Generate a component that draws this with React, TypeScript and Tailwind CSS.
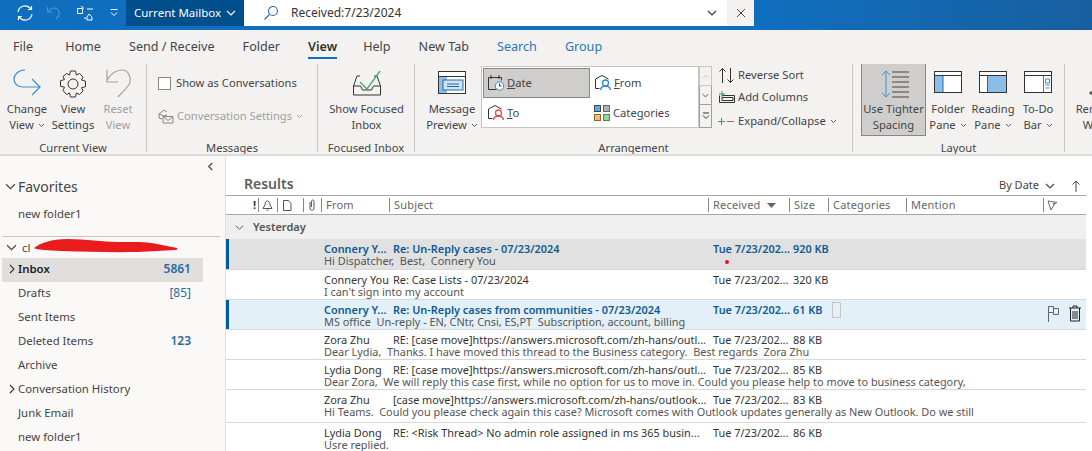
import type { ReactNode } from "react";

const Caret = ({ className = "text-[#605e5c]" }: { className?: string }) => (
  <svg width="7" height="5" viewBox="0 0 7 5" className={`inline-block ml-1 mb-px ${className}`} fill="none" stroke="currentColor">
    <path d="M1 1l2.5 2.5L6 1" />
  </svg>
);

const Chevron = ({ dir = "down", size = 10, className = "" }: { dir?: "down" | "right" | "left"; size?: number; className?: string }) => (
  <svg width={size} height={size} viewBox="0 0 10 10" fill="none" stroke="currentColor" strokeWidth="1.1" className={className}>
    {dir === "down" && <path d="M1 3l4 4 4-4" />}
    {dir === "right" && <path d="M3 1l4 4-4 4" />}
    {dir === "left" && <path d="M7 1L3 5l4 4" strokeWidth="1.6" />}
  </svg>
);

function LargeButton({ icon, lines, caret, disabled, w, active }: { icon: ReactNode; lines: string[]; caret?: boolean; disabled?: boolean; w: number; active?: boolean }) {
  return (
    <div
      className={`flex flex-col items-center shrink-0 ${active ? "bg-[#cfcecd] border border-[#8a8886] -mt-px h-[73px]" : ""} ${disabled ? "text-[#a19f9d]" : "text-[#444]"}`}
      style={{ width: w }}
    >
      <div className="h-[37px] flex items-center justify-center mt-[1px]">{icon}</div>
      <div className="text-center leading-[16px] whitespace-nowrap mt-[-1px]">
        {lines.map((l, i) => (
          <div key={l}>
            {l}
            {caret && i === lines.length - 1 && <Caret />}
          </div>
        ))}
      </div>
    </div>
  );
}

function Group({ label, w, children, last }: { label: string; w: number; children: ReactNode; last?: boolean }) {
  return (
    <section className={`shrink-0 flex flex-col h-[88px] ${last ? "" : "border-r border-[#c8c6c4]"}`} style={{ width: w }}>
      <div className="flex h-[73px] shrink-0">{children}</div>
      <div className="shrink-0 text-center text-[#444] leading-[14px] mt-[4px] whitespace-nowrap">{label}</div>
    </section>
  );
}

const Frame = ({ fill }: { fill: "left" | "right" | "todo" }) => (
  <svg width="30" height="24" viewBox="0 0 30 24" fill="none" stroke="#333" className="mb-[4px]">
    <rect x="1.5" y="5.5" width="27" height="17" fill="#fff" />
    {fill === "left" && <rect x="2" y="6" width="8" height="16" fill="#8cbde9" stroke="none" />}
    {fill === "right" && <rect x="10" y="6" width="18" height="16" fill="#8cbde9" stroke="none" />}
    {fill === "left" && <path d="M10 6v16" stroke="#1f6fb2" />}
    {fill === "right" && <path d="M9.5 6v16" stroke="#1f6fb2" />}
    {fill === "todo" && <path d="M20.5 6v16" stroke="#1f8ab2" />}
    {fill === "todo" && <path d="M22.5 9h4v4h-4zM22.5 15h4M22.5 18h4" stroke="#3a8cc9" />}
    <rect x="1.5" y="1.5" width="27" height="4" fill="#fff" />
  </svg>
);

const PersonCard = ({ color, date }: { color: string; date?: boolean }) => (
  <svg width="18" height="18" viewBox="0 0 18 18" fill="none" stroke="#333" className="shrink-0">
    {date ? (
      <>
        <path d="M1.5 3.5h13M1.5 3.5v12h8M14.5 3.5v3M4 1v4M12 1v4" />
        <circle cx="12.5" cy="12" r="4.2" stroke={color} fill="#fff" />
        <path d="M12.5 9.5V12h2" stroke="#333" />
      </>
    ) : (
      <>
        <path d="M1.5 14.5V5L8 1.5 14.5 5M1.5 14.5h4" />
        <circle cx="11.5" cy="9" r="3" stroke={color} strokeWidth="1.3" />
        <path d="M6.5 16c.5-3 2.5-4 5-4s4.500 1 5 4" stroke={color} strokeWidth="1.3" />
      </>
    )}
  </svg>
);

const Tile = ({ selected, children }: { selected?: boolean; children: ReactNode }) => (
  <div className={`h-[30px] flex items-center gap-[2px] pl-[3px] text-[#444] ${selected ? "bg-[#cfcecd] border border-[#8a8886]" : "border border-transparent"}`}>
    {children}
  </div>
);

type Msg = {
  from: string;
  subject: string;
  received: string;
  size: string;
  preview: string;
  unread?: boolean;
  bg?: string;
  h?: number;
  extra?: ReactNode;
};

const messages: Msg[] = [
  {
    from: "Connery Y...",
    subject: "Re: Un-Reply cases - 07/23/2024",
    received: "Tue 7/23/202...",
    size: "920 KB",
    preview: "Hi Dispatcher,  Best,  Connery You",
    unread: true,
    bg: "bg-[#e1e1e1]",
    h: 31,
    extra: <span className="absolute left-[499px] top-[21px] w-[4px] h-[4px] rounded-full bg-[#e81123]" />,
  },
  {
    from: "Connery You",
    subject: "Re: Case Lists - 07/23/2024",
    received: "Tue 7/23/202...",
    size: "320 KB",
    preview: "I can't sign into my account",
  },
  {
    from: "Connery Y...",
    subject: "Re: Un-Reply cases from communities - 07/23/2024",
    received: "Tue 7/23/202...",
    size: "61 KB",
    preview: "MS office  Un-reply - EN, CNtr, Cnsi, ES,PT  Subscription, account, billing",
    unread: true,
    bg: "bg-[#e3f0f8]",
    extra: (
      <>
        <span className="absolute left-[606px] top-[2px] w-[9px] h-[16px] border border-[#c8c6c4]" />
        <svg width="12" height="18" viewBox="0 0 12 18" fill="none" stroke="#666" className="absolute left-[821px] top-[5px]">
          <path d="M1.500 17V1.500h5v2h5v6h-5v-2h-5M6.500 1.500v6" />
        </svg>
        <svg width="14" height="17" viewBox="0 0 14 17" fill="none" stroke="#222" className="absolute left-[842px] top-[5px]">
          <path d="M1 3h12M5 3V1h4v2M2.500 3v13h9V3M5 6v8M7 6v8M9 6v8" />
        </svg>
      </>
    ),
  },
  {
    from: "Zora Zhu",
    subject: "RE: [case move]https://answers.microsoft.com/zh-hans/outl...",
    received: "Tue 7/23/202...",
    size: "88 KB",
    preview: "Dear Lydia,  Thanks. I have moved this thread to the Business category.  Best regards  Zora Zhu",
  },
  {
    from: "Lydia Dong",
    subject: "RE: [case move]https://answers.microsoft.com/zh-hans/outl...",
    received: "Tue 7/23/202...",
    size: "85 KB",
    preview: "Dear Zora,  We will reply this case first, while no option for us to move in. Could you please help to move to business category,",
  },
  {
    from: "Zora Zhu",
    subject: "[case move]https://answers.microsoft.com/zh-hans/outlook...",
    received: "Tue 7/23/202...",
    size: "83 KB",
    preview: "Hi Teams.  Could you please check again this case? Microsoft comes with Outlook updates generally as New Outlook. Do we still",
    h: 33,
  },
  {
    from: "Lydia Dong",
    subject: "RE: <Risk Thread> No admin role assigned in ms 365 busin...",
    received: "Tue 7/23/202...",
    size: "86 KB",
    preview: "Usre replied.",
  },
];

function MessageRow({ m }: { m: Msg }) {
  return (
    <div
      className={`relative shrink-0 border-b border-[#d8d8d8] pt-[4px] pl-[98px] leading-[12px] text-[10.9px] ${m.bg ?? ""} ${m.unread ? "text-[#0f5a92] font-semibold" : "text-[#333]"}`}
      style={{ height: m.h ?? 30 }}
    >
      {m.unread && <span className="absolute left-0 top-0 bottom-0 w-[3px] bg-[#005a9e]" />}
      <div className="flex whitespace-nowrap">
        <span className="w-[69px]">{m.from}</span>
        <span className="w-[320px]">{m.subject}</span>
        <span className="w-[80px]">{m.received}</span>
        <span>{m.size}</span>
      </div>
      <div className="font-normal text-[#555] whitespace-pre">{m.preview}</div>
      {m.extra}
    </div>
  );
}

const HeaderCell = ({ w, children }: { w: number; children?: ReactNode }) => (
  <div className="shrink-0 h-[14px] border-l border-[#8a8886] pl-[4px] flex items-center whitespace-nowrap overflow-hidden" style={{ width: w }}>
    {children}
  </div>
);

function NavRow({ label, count, chevron, bold, bracket, selected }: { label: string; count?: string; chevron?: boolean; bold?: boolean; bracket?: boolean; selected?: boolean }) {
  return (
    <div className={`h-[24px] w-[201px] ml-[2px] pb-[2px] flex items-center pl-[16px] pr-[12px] relative ${selected ? "bg-[#e1dfdd]" : ""}`}>
      {chevron && <Chevron dir="right" className="absolute left-[5px] text-[#333]" />}
      <span className={`flex-1 whitespace-nowrap ${bold ? "font-semibold text-[#222]" : "text-[#444]"}`}>{label}</span>
      {count && <span className={`text-[#2b6a9f] text-[12px] ${bracket ? "" : "font-semibold"}`}>{count}</span>}
    </div>
  );
}

export default function App() {
  const navRows = [
    { label: "Inbox", count: "5861", chevron: true, bold: true, selected: true },
    { label: "Drafts", count: "[85]", bracket: true },
    { label: "Sent Items" },
    { label: "Deleted Items", count: "123" },
    { label: "Archive" },
    { label: "Conversation History", chevron: true },
    { label: "Junk Email" },
    { label: "new folder1" },
  ];

  return (
    <div className="w-[1092px] h-[451px] overflow-hidden bg-white font-['Noto_Sans',sans-serif] text-[12px] flex flex-col">
      {/* title bar */}
      <header className="h-[30px] shrink-0 flex bg-gradient-to-r from-[#106ebe] via-[#106ebe] via-70% to-[#175f9f] text-white">
        <div className="w-[126px] h-[26px] flex items-center pl-[16px] shrink-0">
          <svg width="18" height="18" viewBox="0 0 18 18" fill="none" stroke="#fff" strokeWidth="1.2">
            <path d="M2 8a7 7 0 0 1 12-4l1 1.500M15.500 2v3.500H12M16 10a7 7 0 0 1-12 4l-1-1.500M2.500 16v-3.500H6" />
          </svg>
          <svg width="16" height="16" viewBox="0 0 16 16" fill="none" stroke="#4b93d2" strokeWidth="1.1" className="ml-[12px]">
            <path d="M1.500 2v5h5M2 7c2-4 6-5 9-3s3 7-1 10" />
          </svg>
          <svg width="18" height="16" viewBox="0 0 18 16" fill="none" stroke="#fff" className="ml-[14px]">
            <path d="M1.500 3.500h5v5h-5zM5 1l3 2.500M11 4h6M13 9l3 3v3h-5v-3zM8 13h2" />
          </svg>
          <svg width="10" height="10" viewBox="0 0 10 10" fill="none" stroke="#fff" className="ml-[15px]">
            <path d="M1.500 1.500h7M2 4.500l3 3 3-3" />
          </svg>
        </div>
        <div className="w-[118px] h-[26px] bg-[#004e8c] flex items-center pl-[8px] gap-[5px] text-[11.5px] whitespace-nowrap shrink-0">
          Current Mailbox
          <Chevron size={10} />
        </div>
        <div className="w-[483px] h-[26px] bg-white text-[#333] flex items-center pl-[19px] pr-[10px] shrink-0">
          <svg width="16" height="16" viewBox="0 0 16 16" fill="none" stroke="#2b6a9f" strokeWidth="1.1">
            <circle cx="10" cy="6" r="4.500" />
            <path d="M6.500 9.500L1.500 14.500" />
          </svg>
          <span className="ml-[12px] flex-1">Received:7/23/2024</span>
          <Chevron size={10} className="text-[#333]" />
        </div>
        <div className="w-[27px] h-[26px] bg-[#f3f2f1] text-[#444] flex items-center justify-center shrink-0">
          <svg width="10" height="10" viewBox="0 0 10 10" stroke="currentColor" fill="none">
            <path d="M1 1l8 8M9 1l-8 8" />
          </svg>
        </div>
      </header>

      {/* tabs */}
      <nav className="h-[34px] shrink-0 bg-[#f3f2f1] flex items-center gap-[28px] pl-[13px] text-[12.6px] text-[#444]">
        <span className="mr-[4px]">File</span>
        <span>Home</span>
        <span>Send / Receive</span>
        <span>Folder</span>
        <span className="relative font-semibold text-[#333] mr-[-2px]">
          View
          <span className="absolute left-0 right-0 top-[19px] h-[2px] bg-[#106ebe]" />
        </span>
        <span>Help</span>
        <span>New Tab</span>
        <span className="text-[#2b76b5]">Search</span>
        <span className="text-[#2b76b5]">Group</span>
      </nav>

      {/* ribbon */}
      <div className="h-[92px] shrink-0 bg-[#f3f2f1] border-b-2 border-[#dcdbd9] flex overflow-hidden text-[11.2px]">
        <Group label="Current View" w={147}>
          <div className="flex pl-[4px]">
            <LargeButton
              w={46}
              caret
              lines={["Change", "View"]}
              icon={
                <svg width="30" height="30" viewBox="0 0 30 30" fill="none" stroke="#3c8fd3" strokeWidth="1.200">
                  <path d="M13 1C6 1 2 6 2 10c0 5 4 8 9 8h17M20 10l8 8-8 8" />
                </svg>
              }
            />
            <LargeButton
              w={46}
              lines={["View", "Settings"]}
              icon={
                <svg width="30" height="30" viewBox="0 0 30 30" fill="none" stroke="#333" strokeWidth="1">
                  <circle cx="15" cy="15" r="5" />
                  <path d="M12.500 2h5l1 4 3-1.500 3.500 3.500-1.500 3 4 1.200v5.500l-4 1 1.500 3.300-3.500 3.500-3-1.500-1 4h-5l-1-4-3 1.500L5 21.500l1.500-3.300-4-1v-5.500l4-1.200-1.500-3L8.500 4.500l3 1.500z" />
                </svg>
              }
            />
            <LargeButton
              w={44}
              disabled
              lines={["Reset", "View"]}
              icon={
                <svg width="28" height="30" viewBox="0 0 28 30" fill="none" stroke="#a19f9d" strokeWidth="1.200">
                  <path d="M3 1v12h11M3 11C8 3 14 1 18 1c6 0 9 6 8 12-1 5-7 9-12 15" />
                </svg>
              }
            />
          </div>
        </Group>

        <Group label="Messages" w={171}>
          <div className="pl-[11px] flex flex-col">
            <div className="flex items-center gap-[5px] mt-[12px] h-[14px] text-[#444] whitespace-nowrap">
              <span className="w-[13px] h-[13px] bg-white border border-[#8a8886]" />
              Show as Conversations
            </div>
            <div className="flex items-center gap-[3px] mt-[18px] h-[16px] text-[#a19f9d] whitespace-nowrap">
              <svg width="16" height="16" viewBox="0 0 16 16" fill="none" stroke="#8a8886">
                <path d="M1 6l5-4 3 2M1 6l5 2 3-1M1 6v4l3 1M5 8.500h10v6.500H5zM5 8.500l5 4 5-4" />
              </svg>
              <span>
                Conversation Settings
                <Caret className="text-[#a19f9d]" />
              </span>
            </div>
          </div>
        </Group>

        <Group label="Focused Inbox" w={97}>
          <LargeButton
            w={97}
            lines={["Show Focused", "Inbox"]}
            icon={
              <svg width="30" height="28" viewBox="0 0 30 28" fill="none" stroke="#333">
                <path d="M5 6L1.500 16v9h27v-9L25 6h-3M5 6h3M1.500 16h7l2 4h9l2-4h7" />
                <path d="M8 12l7 7L28 1" stroke="#48a868" strokeWidth="1.300" />
              </svg>
            }
          />
        </Group>

        <Group label="Arrangement" w={438}>
          <div className="ml-[4px] -mr-[4px] shrink-0">
            <LargeButton
              w={66}
              caret
              lines={["Message", "Preview"]}
              icon={
                <svg width="30" height="26" viewBox="0 0 30 26" fill="none" stroke="#333" className="mb-[2px]">
                  <rect x="1.500" y="1.500" width="27" height="22" fill="#fff" />
                  <path d="M1.500 6.500h27" />
                  <rect x="2" y="7" width="8" height="16" fill="#8cbde9" stroke="none" />
                  <rect x="6" y="10" width="20" height="10" fill="#cfe3f5" stroke="#2b6a9f" />
                  <path d="M10 14h12M10 16.500h12" stroke="#2b6a9f" />
                </svg>
              }
            />
          </div>
          <div className="flex mt-[2px] h-[62px] shrink-0">
            <div className="w-[218px] h-[62px] bg-white border border-[#c8c6c4] p-px grid grid-cols-[107px_107px] content-start">
              <Tile selected>
                <PersonCard color="#2b88d8" date />
                <span className="mt-px"><u>D</u>ate</span>
              </Tile>
              <Tile>
                <PersonCard color="#2b88d8" />
                <span className="mt-px"><u>F</u>rom</span>
              </Tile>
              <Tile>
                <PersonCard color="#e04b4b" />
                <span className="mt-px"><u>T</u>o</span>
              </Tile>
              <Tile>
                <div className="grid grid-cols-2 gap-[2px] shrink-0">
                  <span className="w-[7px] h-[7px] bg-[#5ba8e6] border border-[#444]" />
                  <span className="w-[7px] h-[7px] bg-[#b3b0ad] border border-[#666]" />
                  <span className="w-[7px] h-[7px] bg-[#f7b96a] border border-[#8a6a30]" />
                  <span className="w-[7px] h-[7px] bg-[#8fd694] border border-[#4a8a50]" />
                </div>
                <span className="mt-px ml-px">Cate<u>g</u>ories</span>
              </Tile>
            </div>
            <div className="w-[13px] flex flex-col">
              <div className="h-[20px] border border-[#c8c6c4] flex items-center justify-center text-[#c8c6c4]">
                <svg width="7" height="5" viewBox="0 0 7 5" fill="none" stroke="currentColor"><path d="M1 4l2.500-2.500L6 4" /></svg>
              </div>
              <div className="h-[19px] border border-t-0 border-[#a19f9d] flex items-center justify-center text-[#333]">
                <Chevron size={7} />
              </div>
              <div className="h-[23px] border border-t-0 border-[#a19f9d] flex items-center justify-center text-[#333]">
                <svg width="8" height="8" viewBox="0 0 8 8" fill="none" stroke="currentColor"><path d="M1 1h6M1 3.500l3 3 3-3" /></svg>
              </div>
            </div>
          </div>
          <div className="flex flex-col ml-[6px] text-[#444] whitespace-nowrap">
            <div className="h-[22px] flex items-center gap-[3px]">
              <svg width="17" height="17" viewBox="0 0 17 17" fill="none" stroke="#333">
                <path d="M4.500 16V1.500M1.500 4.500l3-3 3 3M12.500 1v14.500M9.500 12.500l3 3 3-3" />
              </svg>
              Reverse Sort
            </div>
            <div className="h-[22px] flex items-center gap-[3px]">
              <svg width="17" height="14" viewBox="0 0 17 14" fill="none" stroke="#333">
                <path d="M1.500 5.500v7h15v-7H4M4 7.500h11v3H4z" />
                <path d="M4 1v6M1 4h6" stroke="#2f9e58" />
              </svg>
              Add Columns
            </div>
            <div className="h-[26px] flex items-center gap-[3px]">
              <svg width="17" height="9" viewBox="0 0 17 9" fill="none">
                <path d="M0 4.500h7M3.500 1v7" stroke="#2f9e58" />
                <path d="M9 4.500h7" stroke="#d9534f" />
              </svg>
              <span>
                Expand/Collapse
                <Caret />
              </span>
            </div>
          </div>
        </Group>

        <Group label="Layout" w={212}>
          <div className="flex pl-[8px]">
            <LargeButton
              w={65}
              active
              lines={["Use Tighter", "Spacing"]}
              icon={
                <svg width="30" height="32" viewBox="0 0 30 32" fill="none">
                  <path d="M7 3v26M3 7l4-4 4 4M3 25l4 4 4-4" stroke="#3c8fd3" />
                  <path d="M13 4h17M13 9h17M13 14h17M13 19h17M13 24h17M13 29h17" stroke="#444" />
                </svg>
              }
            />
            <LargeButton w={44} caret lines={["Folder", "Pane"]} icon={<Frame fill="left" />} />
            <LargeButton w={46} caret lines={["Reading", "Pane"]} icon={<Frame fill="right" />} />
            <LargeButton w={44} caret lines={["To-Do", "Bar"]} icon={<Frame fill="todo" />} />
          </div>
        </Group>

        <Group label="" w={80} last>
          <LargeButton
            w={78}
            lines={["Reminders", "Window"]}
            icon={
              <svg width="30" height="28" viewBox="0 0 30 28" fill="none" stroke="#333">
                <path d="M0 23h4M2 21v4" />
              </svg>
            }
          />
        </Group>
      </div>

      {/* body */}
      <main className="flex-1 flex min-h-0">
        <aside className="w-[226px] shrink-0 bg-[#faf9f7] border-r border-[#e1dfdd] relative text-[11.4px]">
          <div className="flex justify-end pr-[10px] pt-[6px] h-[20px] text-[#555]">
            <Chevron dir="left" size={9} />
          </div>
          <div className="h-[22px] pb-[2px] flex items-center pl-[5px] gap-[2px] text-[14px] text-[#444]">
            <Chevron size={11} className="text-[#444]" />
            Favorites
          </div>
          <div className="h-[38px] pb-[6px] flex items-center pl-[18px] text-[#444]">new folder1</div>
          <div className="ml-[2px] w-[218px] border-t border-[#c8c6c4] h-[22px] relative flex items-center pl-[4px] text-[#444]">
            <Chevron size={11} />
            <span className="ml-[5px]">cl</span>
            <svg width="146" height="16" viewBox="0 0 146 16" className="absolute left-[30px] top-[1px]">
              <path d="M2 10C8 5 20 1 35 1c20 0 35 3 50 3 15 0 30-1 45 3l15 3c1 1 0 2-2 2l-18 1c-30 2-60 1-95 0-15-1-25-1-28-3z" fill="#e81c1c" />
            </svg>
          </div>
          {navRows.map((r) => (
            <NavRow key={r.label} {...r} />
          ))}
        </aside>

        <section className="w-[860px] shrink-0 flex flex-col min-w-0">
          <div className="h-[40px] shrink-0 flex items-end pb-[1px] pl-[18px] pr-[5px] border-b border-[#a6a6a6]">
            <span className="font-semibold text-[14px] text-[#605e5c] flex-1 leading-[18px] mb-px">Results</span>
            <span className="text-[#444] text-[11px] mb-px">By Date</span>
            <Chevron size={10} className="ml-[6px] mb-[3px] text-[#444]" />
            <svg width="10" height="12" viewBox="0 0 10 12" fill="none" stroke="#444" className="ml-[16px] mb-[2px]">
              <path d="M5 12V1M1.500 4.500L5 1l3.500 3.500" />
            </svg>
          </div>
          <div className="h-[19px] shrink-0 flex items-center border-b border-[#a6a6a6] pl-[27px] text-[11px] tracking-[0.2px] text-[#666]">
            <span className="w-[5px] font-bold text-[#333] text-[11px]">!</span>
            <HeaderCell w={19}>
              <svg width="11" height="11" viewBox="0 0 11 11" fill="none" stroke="#555" className="-ml-[1px]"><path d="M5.500 1c-2 0-2.500 2-2.500 4L1 8.500h9L8 5c0-2-.5-4-2.500-4zM4.500 10h2" /></svg>
            </HeaderCell>
            <HeaderCell w={26}>
              <svg width="10" height="11" viewBox="0 0 10 11" fill="none" stroke="#555"><path d="M1.500.5h5l2.500 3v7h-7.500z" /></svg>
            </HeaderCell>
            <HeaderCell w={18}>
              <svg width="8" height="12" viewBox="0 0 8 12" fill="none" stroke="#555"><path d="M2 3v6c0 3 4 3 4 0V2.500C6 .5 3.500.5 3.500 2.500V8" /></svg>
            </HeaderCell>
            <HeaderCell w={68}>From</HeaderCell>
            <HeaderCell w={319}>Subject</HeaderCell>
            <HeaderCell w={81}>
              Received
              <svg width="9" height="5" viewBox="0 0 9 5" className="ml-[6px]"><path d="M0 0h9L4.500 5z" fill="#666" /></svg>
            </HeaderCell>
            <HeaderCell w={39}>Size</HeaderCell>
            <HeaderCell w={78}>Categories</HeaderCell>
            <HeaderCell w={137}>Mention</HeaderCell>
            <HeaderCell w={20}>
              <svg width="11" height="11" viewBox="0 0 11 11" fill="none" stroke="#666" className="-ml-[1px]"><path d="M1 1l9 1.500-4 1.500 2-0.500L4 10z" /></svg>
            </HeaderCell>
          </div>
          <div className="h-[24px] shrink-0 bg-[#efefef] flex items-center pl-[9px] gap-[9px] font-semibold text-[#555] text-[11px]">
            <Chevron size={9} className="text-[#555]" />
            Yesterday
          </div>
          {messages.map((m) => (
            <MessageRow key={m.from + m.size} m={m} />
          ))}
        </section>
      </main>
    </div>
  );
}
